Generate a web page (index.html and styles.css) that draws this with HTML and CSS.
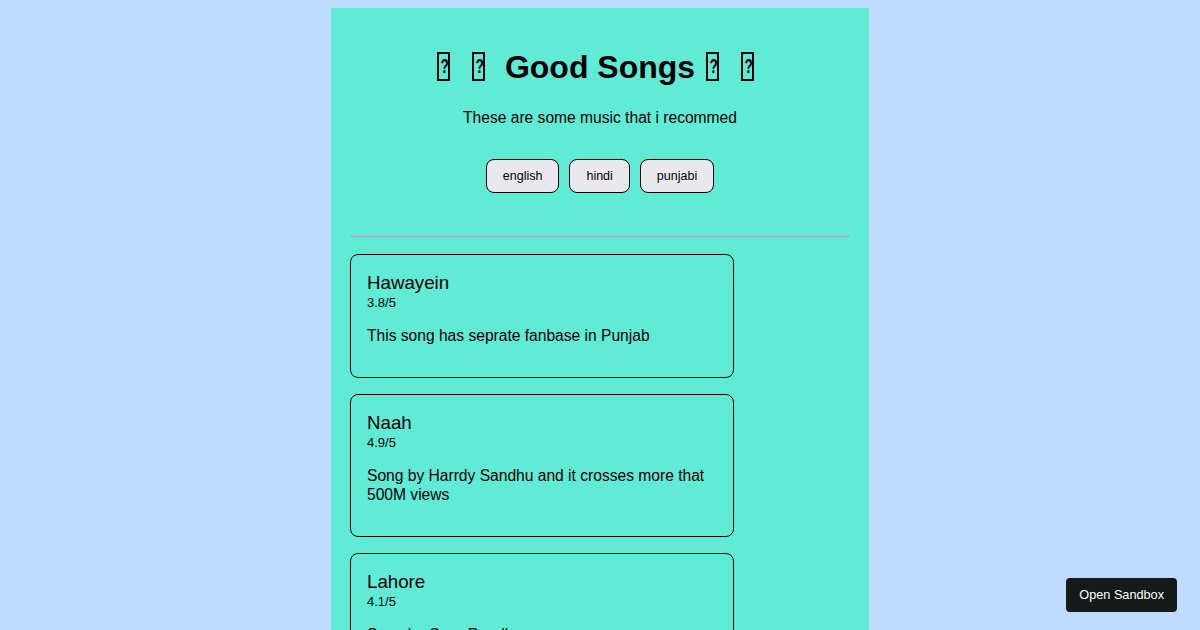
FILE: index.html
```html
<!DOCTYPE html>
<html lang="en">
<head>
<meta charset="utf-8">
<title>Good Songs</title>
<link rel="stylesheet" href="styles.css">
</head>
<body>
<div class="app">
  <h1 class="title"><span class="tofu"><span class="tofu-q">?</span></span> <span class="tofu"><span class="tofu-q">?</span></span> Good Songs <span class="tofu"><span class="tofu-q">?</span></span> <span class="tofu"><span class="tofu-q">?</span></span></h1>
  <p class="subtitle">These are some music that i recommed</p>
  <div class="genres">
    <button class="genre">english</button>
    <button class="genre">hindi</button>
    <button class="genre">punjabi</button>
  </div>
  <hr class="divider">
  <ul class="songs">
    <li class="song">
      <h3 class="song-name">Hawayein</h3>
      <div class="song-rating">3.8/5</div>
      <p class="song-desc">This song has seprate fanbase in Punjab</p>
    </li>
    <li class="song">
      <h3 class="song-name">Naah</h3>
      <div class="song-rating">4.9/5</div>
      <p class="song-desc">Song by Harrdy Sandhu and it crosses more that 500M views</p>
    </li>
    <li class="song">
      <h3 class="song-name">Lahore</h3>
      <div class="song-rating">4.1/5</div>
      <p class="song-desc">Song by Guru Randhawa</p>
    </li>
  </ul>
</div>
<a class="sandbox" href="#">Open Sandbox</a>
</body>
</html>
```
FILE: styles.css
```css
html, body {
  height: 100%;
}
body {
  margin: 8px 0 0 0;
  background: #bfdcff;
  font-family: "Liberation Sans", Arial, sans-serif;
  color: #000;
  overflow: hidden;
}
.app {
  width: 500px;
  margin: 0 auto;
  padding: 20px 19px 40px;
  background: #60ebd7;
  min-height: 100%;
}
.title {
  margin: 21px 0 23px;
  font-size: 32px;
  font-weight: bold;
  text-align: center;
}
.tofu {
  display: inline-block;
  box-sizing: border-box;
  width: 13px;
  height: 29px;
  margin: 0 11px 0 2px;
  border: 2px solid #000;
  font-size: 20px;
  line-height: 25px;
  text-align: center;
  overflow: hidden;
  vertical-align: -3px;
}
.tofu-q {
  display: inline-block;
  width: 9px;
  transform: scaleX(0.68);
  transform-origin: center;
}
.subtitle {
  margin: 0;
  font-size: 15.6px;
  line-height: 18px;
  text-align: center;
}
.genres {
  display: flex;
  justify-content: center;
  gap: 10px;
  margin-top: 32px;
}
.genre {
  font-family: "Liberation Sans", Arial, sans-serif;
  font-size: 12.5px;
  color: #000;
  background: #e9e9ed;
  border: 1px solid #000;
  border-radius: 8px;
  padding: 8px 16px;
  height: 34px;
}
.divider {
  border: 0;
  border-top: 1px solid #a8a8a8;
  margin: 43px 0 17px;
  height: 0;
}
.songs {
  list-style: none;
  margin: 0;
  padding: 0;
  display: flex;
  flex-direction: column;
  gap: 16px;
}
.song {
  width: 384px;
  box-sizing: border-box;
  border: 1px solid #000;
  border-radius: 8px;
  padding: 16px 16px;
}
.song-name {
  margin: 0;
  font-size: 18.72px;
  font-weight: normal;
  line-height: 24px;
}
.song-rating {
  font-size: 13px;
  line-height: 16px;
}
.song-desc {
  margin: 15px 0 16px;
  font-size: 15.6px;
  line-height: 19px;
}
.sandbox {
  position: fixed;
  right: 23px;
  bottom: 18px;
  background: #131a18;
  color: #fff;
  font-size: 12.7px;
  text-decoration: none;
  padding: 9px 13px;
  border-radius: 4px;
  line-height: 16px;
}
```
